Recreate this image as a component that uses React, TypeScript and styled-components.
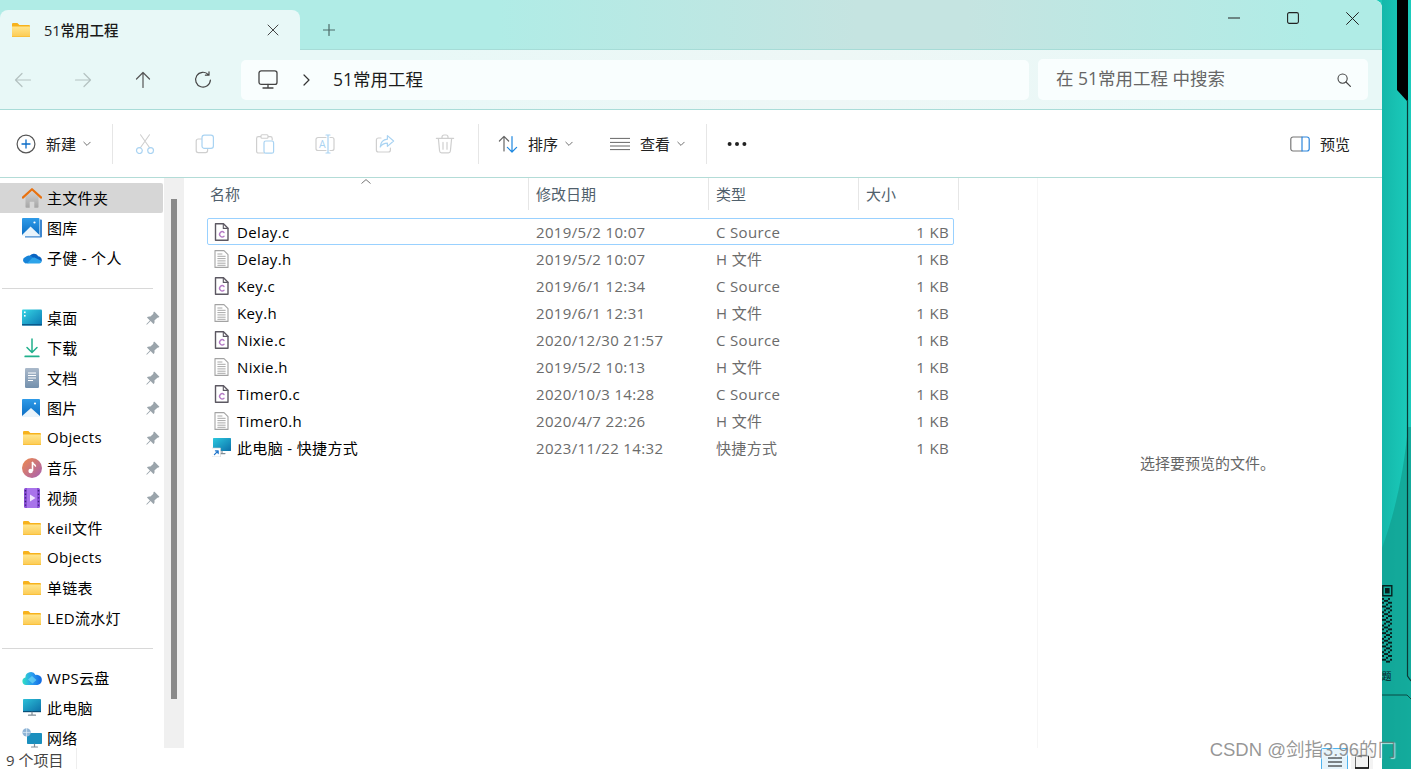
import React from 'react';
import styled, { createGlobalStyle } from 'styled-components';
import { BsPinAngleFill } from 'react-icons/bs';

const GlobalStyle = createGlobalStyle`
  html, body {
    margin: 0;
    padding: 0;
    height: 100%;
    overflow: hidden;
    background: #1cc9b8;
    font-family: "Open Sans", "Noto Sans CJK SC", sans-serif;
  }
`;

/* icons ------------- */
const Glyph = styled.svg<{ $w?: number; $h?: number }>`
  display: block;
  flex: none;
  width: ${(p) => p.$w ?? 20}px;
  height: ${(p) => p.$h ?? p.$w ?? 20}px;
  fill: none;
  stroke-linecap: round;
  stroke-linejoin: round;
`;

const FolderIcon: React.FC<{ w?: number }> = ({ w = 18 }) => (
  <Glyph $w={w} $h={w * 0.8} viewBox="0 0 18 14.4">
    <defs>
      <linearGradient id="fold" x1="0" y1="0" x2="0" y2="1">
        <stop offset="0" stopColor="#ffe68f" />
        <stop offset="1" stopColor="#fcc94f" />
      </linearGradient>
    </defs>
    <path d="M0 1a1 1 0 0 1 1-1h4.4l2 2H17a1 1 0 0 1 1 1v2H0z" fill="#f7b21c" />
    <path d="M0 3.4h18v10a1 1 0 0 1-1 1H1a1 1 0 0 1-1-1z" fill="url(#fold)" />
    <path d="M0 13.6h18v.1a.8.8 0 0 1-.8.7H.8a.8.8 0 0 1-.8-.7z" fill="#f5b322" />
  </Glyph>
);

const HomeIcon = () => (
  <Glyph $w={20} viewBox="0 0 20 20">
    <defs>
      <linearGradient id="homeWall" x1="0" y1="0" x2="0" y2="1">
        <stop offset="0" stopColor="#d2d2d2" />
        <stop offset="1" stopColor="#a5a5a5" />
      </linearGradient>
    </defs>
    <path d="M3.5 9 10 3l6.5 6v10a.8.8 0 0 1-.8.8h-3.4v-6H7.7v6H4.3a.8.8 0 0 1-.8-.8z" fill="url(#homeWall)" />
    <path d="M.8 9.6 10 1.2l9.2 8.4" stroke="#e8710f" strokeWidth="2.2" />
  </Glyph>
);

const PictureTile: React.FC<{ stacked?: boolean }> = ({ stacked }) => (
  <Glyph $w={20} viewBox="0 0 20 20">
    <defs>
      <linearGradient id="picBlue" x1="0" y1="0" x2="0" y2="1">
        <stop offset="0" stopColor="#2f9be8" />
        <stop offset="1" stopColor="#0a6cc2" />
      </linearGradient>
    </defs>
    {stacked && <path d="M18 1.5h1a1 1 0 0 1 1 1v16a1 1 0 0 1-1 1H3v-1.2h15z" fill="#3f87cf" />}
    <rect x="0" y={stacked ? 0 : 1} width={stacked ? 17.5 : 18} height={18} rx="1" fill="url(#picBlue)" />
    <path d={stacked ? 'M0 17 8.6 8.4 17.5 17v1H0z' : 'M0 18 9 10l9 8v1H0z'} fill="#eaf4fb" />
    <circle cx={stacked ? 12.5 : 13} cy={stacked ? 4.5 : 5.5} r="1.1" fill="#fff" />
  </Glyph>
);

const CloudIcon = () => (
  <Glyph $w={20} viewBox="0 0 20 20">
    <path d="M7.2 9.2a5 5 0 0 1 9-1 4 4 0 0 1 3.4 5.2L11 11z" fill="#0a64c2" />
    <path d="M3.6 15.4A3.3 3.3 0 0 1 3.4 9a5 5 0 0 1 5.4-1.2L16 14z" fill="#1784d8" />
    <path d="M5 15.6h12.4a2.4 2.4 0 0 0 2.2-2.6L12.5 9.6a4 4 0 0 0-3.3 1.3z" fill="#2ea4ea" />
  </Glyph>
);

const DesktopIcon = () => (
  <Glyph $w={20} viewBox="0 0 20 20">
    <defs>
      <linearGradient id="deskBg" x1="0" y1="0" x2="1" y2="1">
        <stop offset="0" stopColor="#36d6e4" />
        <stop offset="1" stopColor="#0b78b4" />
      </linearGradient>
    </defs>
    <rect y="1.5" width="20" height="16" rx="1" fill="url(#deskBg)" />
    <rect x="2" y="3.5" width="1.6" height="1.6" fill="#fff" />
    <rect x="2" y="7" width="1.6" height="1.6" fill="#fff" />
    <rect y="16" width="20" height="1.5" fill="#0a5a8c" />
  </Glyph>
);

const DownloadIcon = () => (
  <Glyph $w={20} viewBox="0 0 20 20">
    <path d="M10 1v13M5 9.5l5 5 5-5" stroke="#21b08c" strokeWidth="1.5" />
    <path d="M3.2 18.4h13.6" stroke="#21b08c" strokeWidth="1.7" />
  </Glyph>
);

const DocsIcon = () => (
  <Glyph $w={20} viewBox="0 0 20 20">
    <defs>
      <linearGradient id="docBg" x1="0" y1="0" x2="0" y2="1">
        <stop offset="0" stopColor="#aab9ca" />
        <stop offset="1" stopColor="#7390ad" />
      </linearGradient>
    </defs>
    <rect x="3" y="0" width="14" height="20" rx="1.2" fill="url(#docBg)" />
    <path d="M6 5h8M6 7.5h8M6 10h8M6 12.5h5" stroke="#fff" strokeWidth="1" strokeLinecap="butt" />
  </Glyph>
);

const MusicIcon = () => (
  <Glyph $w={20} viewBox="0 0 20 20">
    <defs>
      <linearGradient id="musicBg" x1="0" y1="0" x2="1" y2="1">
        <stop offset="0" stopColor="#ef8a4b" />
        <stop offset="1" stopColor="#a55fb4" />
      </linearGradient>
    </defs>
    <circle cx="10" cy="10" r="10" fill="url(#musicBg)" />
    <path d="M10.5 4.5v8" stroke="#fff" strokeWidth="1.6" />
    <path d="M10.5 4.5c.4 1.8 2.6 2 3 3.6" stroke="#fff" strokeWidth="1.4" />
    <circle cx="8.6" cy="13" r="2.2" fill="#fff" />
  </Glyph>
);

const VideoIcon = () => (
  <Glyph $w={20} viewBox="0 0 20 20">
    <rect x="2" width="16" height="20" rx="1.5" fill="#8a4fd6" />
    <rect x="5" width="10" height="20" fill="#a873ea" />
    <path d="M8 6.5v7l5.5-3.5z" fill="#efe4fd" />
    <path d="M3.5 2v16M16.5 2v16" stroke="#3d1f7a" strokeWidth="1.4" strokeDasharray="1.4 2.2" strokeLinecap="butt" />
  </Glyph>
);

const WpsIcon = () => (
  <Glyph $w={20} viewBox="0 0 20 20">
    <defs>
      <linearGradient id="wpsBg" x1="0" y1="0" x2="1" y2="0">
        <stop offset="0" stopColor="#2fe0c4" />
        <stop offset="0.5" stopColor="#2a9cf0" />
        <stop offset="1" stopColor="#1168e0" />
      </linearGradient>
    </defs>
    <path d="M4 17a3.8 3.8 0 0 1-.6-7.5A5.4 5.4 0 0 1 13.6 7a4.2 4.2 0 0 1 2.4 0 5 5 0 0 1 3.8 5.2A4.7 4.7 0 0 1 15.2 17z" fill="url(#wpsBg)" />
    <path d="M6 11.5 10 8l4.5 4-4 3.5z" fill="#6fd8f4" opacity="0.7" />
  </Glyph>
);

const MonitorColor: React.FC<{ w?: number }> = ({ w = 18 }) => (
  <Glyph $w={w} $h={w} viewBox="0 0 18 18">
    <defs>
      <linearGradient id="pcBg" x1="0" y1="0" x2="1" y2="1">
        <stop offset="0" stopColor="#2cc0d8" />
        <stop offset="1" stopColor="#0d6fa8" />
      </linearGradient>
    </defs>
    <rect width="18" height="13" rx="0.8" fill="url(#pcBg)" />
    <rect y="12" width="18" height="1.2" fill="#0a4f78" />
    <path d="M9 13.2v2.6M5.5 16.2h7" stroke="#7f8c96" strokeWidth="1.2" />
  </Glyph>
);

const NetworkIcon = () => (
  <Glyph $w={20} viewBox="0 0 20 20">
    <rect x="5" y="5" width="15" height="11" rx="0.8" fill="#1a8fbe" />
    <path d="M12.5 16v2.4M9.5 19h6" stroke="#7f8c96" strokeWidth="1.2" />
    <circle cx="4.6" cy="4.4" r="4.2" fill="#8fb4d6" />
    <path d="M1 4.4h7M4.6.4v8" stroke="#e8f2fa" strokeWidth="0.7" />
  </Glyph>
);

const SourceFileIcon = () => (
  <Glyph $w={15} $h={18} viewBox="0 0 15 18">
    <path d="M1.5.8h8L14 5.2v12H1.5z" fill="#fff" stroke="#5c5862" strokeWidth="1.4" />
    <path d="M9.3 1v4.4H14" stroke="#5c5862" strokeWidth="1.1" />
    <path d="M10 9.4a2.6 2.6 0 1 0 0 3.8" stroke="#b57cc6" strokeWidth="1.4" />
  </Glyph>
);

const HeaderFileIcon = () => (
  <Glyph $w={15} $h={18} viewBox="0 0 15 18">
    <path d="M1 .6h9L14 4.6v12.8H1z" fill="#fff" stroke="#a3a3a3" strokeWidth="1.1" />
    <path d="M3.4 4h5M3.4 6.3h8.2M3.4 8.6h8.2M3.4 10.9h8.2M3.4 13.2h8.2M3.4 15.3h8.2" stroke="#a8a8a8" strokeWidth="1" strokeLinecap="butt" />
  </Glyph>
);

const ShortcutIcon = () => (
  <Glyph $w={19} $h={19} viewBox="0 0 19 19">
    <defs>
      <linearGradient id="scBg" x1="0" y1="0" x2="1" y2="1">
        <stop offset="0" stopColor="#2cc8de" />
        <stop offset="1" stopColor="#0b70aa" />
      </linearGradient>
    </defs>
    <rect x="1" y="0" width="18" height="13" rx="0.6" fill="url(#scBg)" />
    <path d="M10 13v2.4M7 15.6h6" stroke="#7f8c96" strokeWidth="1.1" />
    <rect y="10" width="8.5" height="9" fill="#fff" stroke="#d0d0d0" strokeWidth="0.6" />
    <path d="M2.4 16.6 6 13M3.4 12.8H6.2v2.8" stroke="#2277cc" strokeWidth="1.2" />
  </Glyph>
);

const Chevron = () => (
  <Glyph $w={8} $h={6} viewBox="0 0 8 6">
    <path d="M.8 1.2 4 4.4l3.2-3.2" stroke="#707070" strokeWidth="1" />
  </Glyph>
);

const ICON_BLUE = '#a9d3f2';
const ICON_GREY = '#cfcfcf';

const toolIcons: Record<string, React.ReactNode> = {
  cut: (
    <>
      <path d="M5.2 14 14.5.8M14.8 14 5.5.8" stroke={ICON_GREY} strokeWidth="1.1" />
      <circle cx="4.4" cy="16.6" r="2.9" stroke={ICON_BLUE} strokeWidth="1.2" />
      <circle cx="15.6" cy="16.6" r="2.9" stroke={ICON_BLUE} strokeWidth="1.2" />
    </>
  ),
  copy: (
    <>
      <path d="M6.5 5H3.2A2 2 0 0 0 1.2 7v9.6a2 2 0 0 0 2 2h7.4a2 2 0 0 0 2-2v-1.8" stroke={ICON_GREY} strokeWidth="1.2" />
      <rect x="7" y="1.2" width="11.4" height="13.2" rx="2.4" stroke={ICON_BLUE} strokeWidth="1.2" />
    </>
  ),
  paste: (
    <>
      <path d="M9 19H3.4a1.8 1.8 0 0 1-1.8-1.8V4.4a1.8 1.8 0 0 1 1.8-1.8h12a1.8 1.8 0 0 1 1.8 1.8V6" stroke={ICON_GREY} strokeWidth="1.2" />
      <rect x="6" y="0.8" width="7" height="3.4" rx="1" fill="#fff" stroke={ICON_GREY} strokeWidth="1.1" />
      <rect x="9" y="7" width="9.6" height="12.2" rx="1.8" stroke={ICON_BLUE} strokeWidth="1.2" />
    </>
  ),
  rename: (
    <>
      <path d="M11 3.5H3a2 2 0 0 0-2 2v9a2 2 0 0 0 2 2h8M15 3.5h2a2 2 0 0 1 2 2v9a2 2 0 0 1-2 2h-2" stroke={ICON_GREY} strokeWidth="1.2" />
      <path d="M11 1h4M13 1v18M11 19h4" stroke={ICON_BLUE} strokeWidth="1.2" />
      <text x="4" y="14" fontFamily="Open Sans, sans-serif" fontSize="10.5" fill={ICON_BLUE}>A</text>
    </>
  ),
  share: (
    <>
      <path d="M6 4H3.4a2 2 0 0 0-2 2v10a2 2 0 0 0 2 2h10a2 2 0 0 0 2-2v-2" stroke={ICON_GREY} strokeWidth="1.2" />
      <path d="M12.4 1.6 18.6 7l-6.2 5.4V9.2c-3.4 0-5.6 1.2-7.2 3.8.4-4.6 3-7.4 7.2-7.8z" stroke={ICON_BLUE} strokeWidth="1.2" />
    </>
  ),
  trash: (
    <>
      <path d="M1.4 4.4h17.2M7 4.2V3a2 2 0 0 1 2-2h2a2 2 0 0 1 2 2v1.2" stroke={ICON_GREY} strokeWidth="1.2" />
      <path d="M3.4 4.6 4.6 17a2 2 0 0 0 2 1.8h6.8a2 2 0 0 0 2-1.8l1.2-12.4M8 8.4v6.8M12 8.4v6.8" stroke={ICON_GREY} strokeWidth="1.2" />
    </>
  ),
};

const sideIcons: Record<string, React.ReactNode> = {
  home: <HomeIcon />,
  gallery: <PictureTile stacked />,
  cloud: <CloudIcon />,
  desktop: <DesktopIcon />,
  download: <DownloadIcon />,
  docs: <DocsIcon />,
  pictures: <PictureTile />,
  folder: <FolderIcon />,
  music: <MusicIcon />,
  video: <VideoIcon />,
  wps: <WpsIcon />,
  pc: <MonitorColor />,
  network: <NetworkIcon />,
};
/* ------------- */

const sideGroups = [
  [
    { icon: 'home', text: '主文件夹', active: true },
    { icon: 'gallery', text: '图库' },
    { icon: 'cloud', text: '子健 - 个人' },
  ],
  [
    { icon: 'desktop', text: '桌面', pin: true },
    { icon: 'download', text: '下载', pin: true },
    { icon: 'docs', text: '文档', pin: true },
    { icon: 'pictures', text: '图片', pin: true },
    { icon: 'folder', text: 'Objects', pin: true },
    { icon: 'music', text: '音乐', pin: true },
    { icon: 'video', text: '视频', pin: true },
    { icon: 'folder', text: 'keil文件' },
    { icon: 'folder', text: 'Objects' },
    { icon: 'folder', text: '单链表' },
    { icon: 'folder', text: 'LED流水灯' },
  ],
  [
    { icon: 'wps', text: 'WPS云盘' },
    { icon: 'pc', text: '此电脑' },
    { icon: 'network', text: '网络' },
  ],
];

const files = [
  { name: 'Delay.c', date: '2019/5/2 10:07', type: 'C Source', kind: 'c' },
  { name: 'Delay.h', date: '2019/5/2 10:07', type: 'H 文件', kind: 'h' },
  { name: 'Key.c', date: '2019/6/1 12:34', type: 'C Source', kind: 'c' },
  { name: 'Key.h', date: '2019/6/1 12:31', type: 'H 文件', kind: 'h' },
  { name: 'Nixie.c', date: '2020/12/30 21:57', type: 'C Source', kind: 'c' },
  { name: 'Nixie.h', date: '2019/5/2 10:13', type: 'H 文件', kind: 'h' },
  { name: 'Timer0.c', date: '2020/10/3 14:28', type: 'C Source', kind: 'c' },
  { name: 'Timer0.h', date: '2020/4/7 22:26', type: 'H 文件', kind: 'h' },
  { name: '此电脑 - 快捷方式', date: '2023/11/22 14:32', type: '快捷方式', kind: 'link' },
];

const fileIcon = (kind: string) => {
  if (kind === 'c') return <SourceFileIcon />;
  if (kind === 'h') return <HeaderFileIcon />;
  return <ShortcutIcon />;
};

// cells of the QR code on the wallpaper behind the window
const qrCells = Array.from({ length: 170 }, (_, i) => i).filter(
  (i) => (i * i * 31 + i * 17) % 7 < 4,
);

const Wallpaper = () => (
  <WallpaperBox>
    <WallpaperArt viewBox="1382 0 29 769">
      <path d="M1382 548C1396 510 1404 470 1408 427L1411 427V769H1382z" fill="#12a091" opacity="0.75" />
      <path d="M1397 0h11v100l-1 1-10-11z" fill="#000" />
      <path d="M1407.5 100v576l3.5 5" stroke="#0b3a36" strokeWidth="1.2" fill="none" />
      <path d="M1382 695h25l4 4" stroke="#0b4a44" strokeWidth="1" fill="none" />
      <path d="M1382.8 585.8h9v10h-9z" stroke="#07201e" strokeWidth="1.4" fill="none" />
      <rect x="1385" y="588" width="4.6" height="5.4" fill="#07201e" />
      {qrCells.map((i) => (
        <rect
          key={i}
          x={1382 + (i % 5) * 2}
          y={598 + Math.floor(i / 5) * 1.9}
          width="2"
          height="1.9"
          fill="#07201e"
        />
      ))}
      <text x="1381.5" y="680" fontSize="10" fill="#07201e" fontFamily="Noto Sans CJK SC, sans-serif">题</text>
    </WallpaperArt>
  </WallpaperBox>
);

const App: React.FC = () => (
  <Page>
    <GlobalStyle />
    <Window>
      <TitleBar>
        <Tab>
          <FolderIcon />
          <TabTitle>51常用工程</TabTitle>
          <Glyph $w={12} viewBox="0 0 12 12">
            <path d="M1 1l10 10M11 1 1 11" stroke="#444" strokeWidth="1" />
          </Glyph>
        </Tab>
        <NewTab>
          <Glyph $w={12} viewBox="0 0 12 12">
            <path d="M6 .5v11M.5 6h11" stroke="#4d6a68" strokeWidth="1.2" />
          </Glyph>
        </NewTab>
        <WindowControls>
          <CaptionButton>
            <Glyph $w={12} viewBox="0 0 12 12">
              <path d="M0 6h12" stroke="#222" strokeWidth="1" strokeLinecap="butt" />
            </Glyph>
          </CaptionButton>
          <CaptionButton>
            <Glyph $w={12} viewBox="0 0 12 12">
              <rect x="0.6" y="0.6" width="10.8" height="10.8" rx="1.6" stroke="#222" strokeWidth="1.1" />
            </Glyph>
          </CaptionButton>
          <CaptionButton>
            <Glyph $w={13} viewBox="0 0 13 13">
              <path d="M.6.6l11.8 11.8M12.4.6.6 12.4" stroke="#222" strokeWidth="1" />
            </Glyph>
          </CaptionButton>
        </WindowControls>
      </TitleBar>

      <AddressRow>
        <NavButton>
          <Glyph $w={18} viewBox="0 0 18 18">
            <path d="M16.5 9h-15M8 2.5 1.5 9 8 15.5" stroke="#b4c2c1" strokeWidth="1.2" />
          </Glyph>
        </NavButton>
        <NavButton>
          <Glyph $w={18} viewBox="0 0 18 18">
            <path d="M1.5 9h15M10 2.5 16.5 9 10 15.5" stroke="#b4c2c1" strokeWidth="1.2" />
          </Glyph>
        </NavButton>
        <NavButton>
          <Glyph $w={18} viewBox="0 0 18 18">
            <path d="M9 16.5v-15M2.5 8 9 1.5 15.5 8" stroke="#555" strokeWidth="1.2" />
          </Glyph>
        </NavButton>
        <NavButton>
          <Glyph $w={18} viewBox="0 0 18 18">
            <path d="M14.4 3.6A7.4 7.4 0 1 0 16.4 9M15 .8v3.4h-3.6" stroke="#444" strokeWidth="1.2" />
          </Glyph>
        </NavButton>
        <AddressBox>
          <Glyph $w={20} viewBox="0 0 20 20">
            <rect x="1" y="0.8" width="18" height="13.6" rx="2.2" stroke="#444" strokeWidth="1.3" />
            <path d="M10 14.4v3M5 18h10" stroke="#444" strokeWidth="1.3" />
          </Glyph>
          <CrumbArrow $w={7} $h={12} viewBox="0 0 7 12">
            <path d="M1 1l5 5-5 5" stroke="#333" strokeWidth="1.2" />
          </CrumbArrow>
          <PathText>51常用工程</PathText>
        </AddressBox>
        <SearchBox>
          <SearchHint>在 51常用工程 中搜索</SearchHint>
          <Glyph $w={14} viewBox="0 0 14 14">
            <circle cx="5.6" cy="5.6" r="4.6" stroke="#444" strokeWidth="1.1" />
            <path d="M9 9l4.4 4.4" stroke="#444" strokeWidth="1.2" />
          </Glyph>
        </SearchBox>
      </AddressRow>

      <Toolbar>
        <MenuButton>
          <Glyph $w={20} viewBox="0 0 20 20">
            <circle cx="10" cy="10" r="8.9" stroke="#555" strokeWidth="1.2" />
            <path d="M10 6v8M6 10h8" stroke="#0a6cc8" strokeWidth="1.3" />
          </Glyph>
          <MenuLabel>新建</MenuLabel>
          <Chevron />
        </MenuButton>
        <ToolSep />
        <IconButtons>
          {Object.keys(toolIcons).map((key) => (
            <IconButton key={key}>
              <Glyph $w={20} viewBox="0 0 20 20">
                {toolIcons[key]}
              </Glyph>
            </IconButton>
          ))}
        </IconButtons>
        <ToolSep />
        <MenuButton>
          <Glyph $w={20} viewBox="0 0 20 20">
            <path d="M6 17V2.4M1.4 7 6 2.4 10.6 7" stroke="#666" strokeWidth="1.2" />
            <path d="M14 2.6V18M9.4 13.4 14 18l4.6-4.6" stroke="#1e88e0" strokeWidth="1.2" />
          </Glyph>
          <MenuLabel>排序</MenuLabel>
          <Chevron />
        </MenuButton>
        <MenuButton>
          <Glyph $w={20} viewBox="0 0 20 20">
            <path d="M0 4.4h20M0 8.4h20M0 12h20M0 15.6h20" stroke="#666" strokeWidth="1" strokeLinecap="butt" />
          </Glyph>
          <MenuLabel>查看</MenuLabel>
          <Chevron />
        </MenuButton>
        <ToolSep />
        <MoreDots>
          <Glyph $w={20} viewBox="0 0 20 20">
            <circle cx="2.6" cy="10" r="2" fill="#222" />
            <circle cx="10" cy="10" r="2" fill="#222" />
            <circle cx="17.4" cy="10" r="2" fill="#222" />
          </Glyph>
        </MoreDots>
        <PreviewToggle>
          <Glyph $w={20} viewBox="0 0 20 20">
            <path d="M12 3H3a2.2 2.2 0 0 0-2.2 2.2v9.6A2.2 2.2 0 0 0 3 17h9" stroke="#777" strokeWidth="1.2" />
            <path d="M12 3h5a2.2 2.2 0 0 1 2.2 2.2v9.6A2.2 2.2 0 0 1 17 17h-5z" stroke="#2c86dc" strokeWidth="1.2" />
          </Glyph>
          <MenuLabel>预览</MenuLabel>
        </PreviewToggle>
      </Toolbar>

      <Body>
        <Sidebar>
          <NavList>
            {sideGroups.map((group, g) => (
              <React.Fragment key={g}>
                {g > 0 && <NavDivider />}
                {group.map((item) => (
                  <NavRow key={item.text + item.icon} $active={item.active}>
                    <NavIconSlot>{sideIcons[item.icon]}</NavIconSlot>
                    <NavText>{item.text}</NavText>
                    {item.pin && (
                      <PinMark>
                        <BsPinAngleFill size={15} />
                      </PinMark>
                    )}
                  </NavRow>
                ))}
              </React.Fragment>
            ))}
          </NavList>
          <ScrollTrack>
            <ScrollThumb />
          </ScrollTrack>
        </Sidebar>

        <FilePane>
          <HeaderRow>
            <HeaderCell $first>
              名称
              <SortCaret viewBox="0 0 10 5">
                <path d="M.5 4.5 5 .6l4.5 3.9" stroke="#666" strokeWidth="0.9" />
              </SortCaret>
            </HeaderCell>
            <HeaderCell>修改日期</HeaderCell>
            <HeaderCell>类型</HeaderCell>
            <HeaderCell>大小</HeaderCell>
          </HeaderRow>
          <FileList>
            {files.map((file, i) => (
              <FileRow key={file.name} $selected={i === 0}>
                <FileName>
                  <FileIconSlot>{fileIcon(file.kind)}</FileIconSlot>
                  {file.name}
                </FileName>
                <FileMeta>{file.date}</FileMeta>
                <FileMeta>{file.type}</FileMeta>
                <FileSize>1 KB</FileSize>
              </FileRow>
            ))}
          </FileList>
        </FilePane>

        <PreviewPane>选择要预览的文件。</PreviewPane>
      </Body>

      <StatusBar>
        <ItemCount>9 个项目</ItemCount>
        <ViewToggle $on>
          <Glyph $w={14} viewBox="0 0 14 14">
            <path d="M0 3h14M0 7h14M0 11h14" stroke="#111" strokeWidth="1" strokeLinecap="butt" />
          </Glyph>
        </ViewToggle>
        <ViewToggle>
          <Glyph $w={14} viewBox="0 0 14 14">
            <rect x="0.5" y="1" width="13" height="12" stroke="#111" strokeWidth="1" />
            <path d="M0 13h14" stroke="#111" strokeWidth="1.4" />
          </Glyph>
        </ViewToggle>
      </StatusBar>
    </Window>
    <Wallpaper />
    <Watermark>CSDN @剑指3.96的冂</Watermark>
  </Page>
);

const Page = styled.div`
  position: relative;
  display: flex;
  width: 1411px;
  height: 769px;
  overflow: hidden;
  background: #1cc9b8;
`;
const Window = styled.div`
  display: flex;
  flex-direction: column;
  width: 1382px;
  height: 769px;
  flex: none;
  background: #fff;
  border-radius: 0 8px 0 0;
  overflow: hidden;
`;
const TitleBar = styled.div`
  display: flex;
  align-items: flex-end;
  height: 50px;
  flex: none;
  box-shadow: inset 0 -1px 0 #a7dcd7;
  background: linear-gradient(90deg, #b0ece6 0%, #b0ece6 36%, #c5e4e1 62%, #c5e4e1 70%, #b0ece6 95%);
`;
const Tab = styled.div`
  display: flex;
  align-items: center;
  width: 300px;
  height: 40px;
  box-sizing: border-box;
  padding: 0 21px 0 12px;
  background: #e8f8f7;
  border-radius: 8px 8px 0 0;
`;
const TabTitle = styled.span`
  flex: 1;
  margin-left: 14px;
  padding-bottom: 2px;
  font-size: 14.5px;
  font-weight: 500;
  color: #1a1a1a;
`;
const NewTab = styled.div`
  display: flex;
  align-items: center;
  justify-content: center;
  width: 58px;
  height: 40px;
`;
const WindowControls = styled.div`
  display: flex;
  align-self: flex-start;
  margin-left: auto;
  margin-right: 0.5px;
`;
const CaptionButton = styled.div`
  display: flex;
  align-items: center;
  justify-content: center;
  width: 59px;
  height: 36px;
`;
const AddressRow = styled.div`
  display: flex;
  align-items: center;
  height: 59px;
  flex: none;
  padding-right: 14px;
  border-bottom: 1px solid #a9dcd8;
  background: linear-gradient(90deg, #e8f8f7 0%, #e8f8f7 30%, #eef7f6 60%, #e8f8f7 90%);
`;
const NavButton = styled.div`
  display: flex;
  align-items: center;
  justify-content: center;
  width: 60px;
  height: 40px;
  &:first-child {
    margin-left: -7px;
  }
`;
const AddressBox = styled.div`
  display: flex;
  align-items: center;
  width: 788px;
  height: 40px;
  margin-left: 8px;
  padding-left: 17px;
  box-sizing: border-box;
  background: #f9fefe;
  border-radius: 5px;
`;
const CrumbArrow = styled(Glyph)`
  margin-left: 25px;
`;
const PathText = styled.span`
  margin-left: 23px;
  padding-bottom: 3px;
  font-size: 17.5px;
  color: #1c1c1c;
`;
const SearchBox = styled.div`
  display: flex;
  align-items: center;
  justify-content: space-between;
  width: 330px;
  height: 41px;
  margin-left: 9px;
  padding: 0 17px 0 18px;
  box-sizing: border-box;
  background: #f9fefe;
  border-radius: 5px;
`;
const SearchHint = styled.span`
  padding-bottom: 4px;
  font-size: 17.5px;
  color: #666;
`;
const Toolbar = styled.div`
  display: flex;
  align-items: center;
  height: 67px;
  flex: none;
  padding-left: 16px;
  border-bottom: 1px solid #b3dcd7;
  background: #fff;
`;
const ToolSep = styled.div`
  width: 1px;
  height: 40px;
  flex: none;
  background: #e6e6e6;
`;
const MenuButton = styled.div`
  display: flex;
  align-items: center;
  margin-right: 21px;
  ${ToolSep} + & {
    margin-left: 19px;
  }
  & + & {
    margin-left: 16px;
  }
`;
const MenuLabel = styled.span`
  margin: 0 7px 0 10px;
  font-size: 15px;
  color: #222;
`;
const IconButtons = styled.div`
  display: flex;
  margin: 0 3px 0 2px;
`;
const IconButton = styled.div`
  display: flex;
  justify-content: center;
  width: 60px;
`;
const MoreDots = styled.div`
  margin-left: 20px;
`;
const PreviewToggle = styled.div`
  display: flex;
  align-items: center;
  margin-left: auto;
  padding-right: 25px;
`;
const Body = styled.div`
  display: flex;
  flex: 1;
  min-height: 0;
`;
const Sidebar = styled.div`
  display: flex;
  flex: none;
  width: 184px;
`;
const NavList = styled.div`
  width: 164px;
  padding-top: 5px;
  box-sizing: border-box;
  overflow: hidden;
`;
const NavRow = styled.div<{ $active?: boolean }>`
  display: flex;
  align-items: center;
  width: 163px;
  height: 30px;
  padding: 0 3px 0 22px;
  box-sizing: border-box;
  border-radius: 0 2px 2px 0;
  background: ${(p) => (p.$active ? '#d6d6d6' : 'transparent')};
`;
const NavIconSlot = styled.div`
  display: flex;
  align-items: center;
  justify-content: center;
  width: 20px;
  flex: none;
`;
const NavText = styled.span`
  margin-left: 5px;
  padding-bottom: 2px;
  font-size: 15px;
  letter-spacing: 0.3px;
  color: #000;
  white-space: nowrap;
`;
const PinMark = styled.span`
  display: flex;
  margin-left: auto;
  color: #9aa4ab;
`;
const NavDivider = styled.div`
  width: 151px;
  height: 1px;
  margin: 15px 0 14px 2px;
  background: #d8d8d8;
`;
const ScrollTrack = styled.div`
  width: 20px;
  background: #f0f0f0;
`;
const ScrollThumb = styled.div`
  width: 6px;
  height: 500px;
  margin: 21px auto 0;
  background: #8a8a8a;
`;
const FilePane = styled.div`
  flex: none;
  width: 853px;
  padding-left: 23px;
  box-sizing: border-box;
`;
const HeaderRow = styled.div`
  display: grid;
  grid-template-columns: 321px 180px 150px 100px;
  height: 32px;
  margin-left: 1px;
`;
const HeaderCell = styled.div<{ $first?: boolean }>`
  position: relative;
  display: flex;
  align-items: center;
  padding: 0 0 2px ${(p) => (p.$first ? 2 : 7)}px;
  border-right: 1px solid #e6e6e6;
  font-size: 15px;
  color: #50606c;
`;
const SortCaret = styled.svg`
  position: absolute;
  left: 153px;
  top: 1px;
  width: 10px;
  height: 5px;
  fill: none;
`;
const FileList = styled.div`
  margin-top: 8px;
`;
const FileRow = styled.div<{ $selected?: boolean }>`
  display: grid;
  grid-template-columns: 321px 180px 150px 94px;
  align-items: center;
  width: 747px;
  height: 27px;
  box-sizing: border-box;
  border: 1px solid ${(p) => (p.$selected ? '#99d1ff' : 'transparent')};
  border-radius: 2px;
`;
const FileName = styled.div`
  display: flex;
  align-items: center;
  font-size: 15px;
  letter-spacing: 0.35px;
  color: #000;
  white-space: nowrap;
`;
const FileIconSlot = styled.span`
  display: flex;
  justify-content: center;
  width: 19px;
  margin: 0 6px 0 4px;
`;
const FileMeta = styled.div`
  padding-left: 7px;
  font-size: 15px;
  letter-spacing: 0.35px;
  color: #6b6b6b;
  white-space: nowrap;
`;
const FileSize = styled(FileMeta)`
  padding: 0 4px 0 0;
  text-align: right;
`;
const PreviewPane = styled.div`
  display: flex;
  align-items: center;
  justify-content: center;
  flex: 1;
  padding: 0 5px 2px 0;
  border-left: 1px solid #f6f6f6;
  font-size: 15px;
  color: #666;
`;
const StatusBar = styled.div`
  display: flex;
  align-items: flex-end;
  height: 21px;
  flex: none;
  padding-right: 9px;
`;
const ItemCount = styled.div`
  width: 70px;
  height: 17px;
  margin-right: auto;
  padding: 4px 0 0 6px;
  border-right: 1px solid #eee;
  font-size: 15px;
  line-height: 17px;
  color: #444;
  white-space: nowrap;
`;
const ViewToggle = styled.div<{ $on?: boolean }>`
  display: flex;
  justify-content: center;
  align-items: flex-start;
  width: ${(p) => (p.$on ? 27 : 22)}px;
  height: 21px;
  margin-left: ${(p) => (p.$on ? 0 : 3)}px;
  padding-top: 6px;
  box-sizing: border-box;
  background: ${(p) => (p.$on ? '#e5f3fb' : '#f3f3f3')};
  border: 1px solid ${(p) => (p.$on ? '#4fb3ee' : 'transparent')};
  border-bottom: 0;
`;
const WallpaperBox = styled.div`
  flex: 1;
  background: linear-gradient(90deg, #14b8aa 0%, #1cccbc 100%);
`;
const WallpaperArt = styled.svg`
  display: block;
  width: 29px;
  height: 769px;
`;
const Watermark = styled.div`
  position: absolute;
  right: 15px;
  top: 735px;
  font-family: "Liberation Sans", "Noto Sans CJK SC", sans-serif;
  font-size: 18.5px;
  color: rgba(110, 110, 110, 0.72);
  text-shadow: 1px 1px 1px rgba(255, 255, 255, 0.7);
  white-space: nowrap;
`;

export default App;
